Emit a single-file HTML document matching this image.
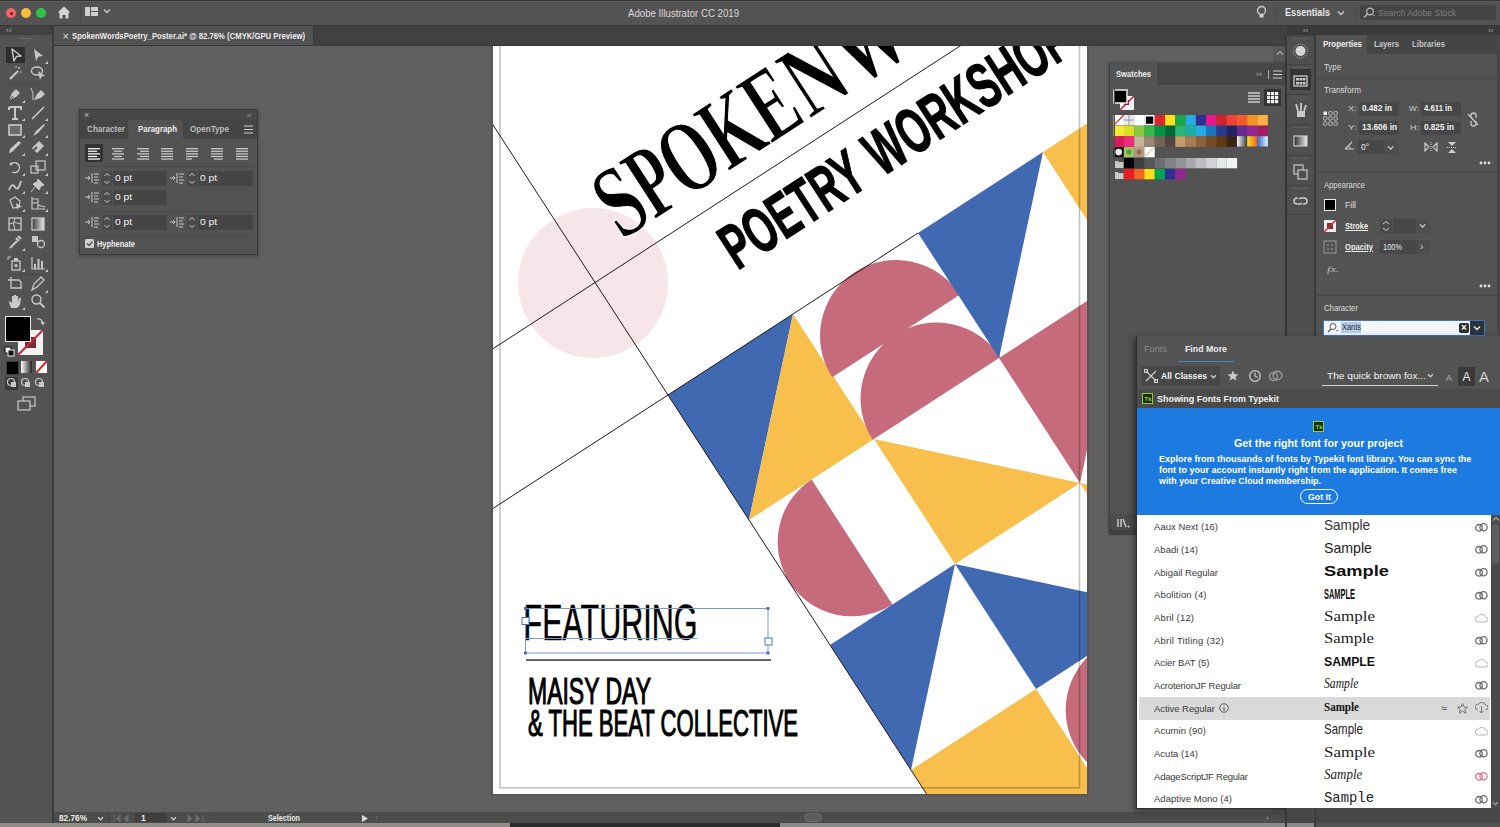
<!DOCTYPE html><html><head><meta charset="utf-8"><style>html,body{margin:0;padding:0;width:1500px;height:827px;overflow:hidden;background:#3b3b3b}body>div,body>svg{position:absolute}</style></head><body><div style="left:0px;top:0px;width:1500px;height:827px;background:#3b3b3b;"></div><div style="left:0px;top:0px;width:1500px;height:26px;background:#535353;border-top:1px solid #353535;border-bottom:1px solid #363636;box-sizing:border-box"></div><div style="left:0px;top:1px;width:1500px;height:1px;background:#5e5e5e;"></div><div style="left:54px;top:46px;width:1219px;height:766px;background:#606060;"></div><div style="left:491px;top:46px;width:598px;height:750px;background:#585858;"></div><svg style="left:493px;top:46px" width="594" height="748" viewBox="493 46 594 748"><rect x="493" y="46" width="594" height="748" fill="#fff"/><circle cx="593" cy="283" r="75" fill="#f6e6e9"/><polygon points="668.0,395.0 793.0,314.0 749.0,520.0" fill="#4169b1"/><polygon points="793.0,314.0 874.0,439.0 749.0,520.0" fill="#f8bf4c"/><path d="M832.2,377.3 A76,76 0 0 1 959.8,294.7 Z" fill="#c56b7b"/><path d="M872.7,439.8 A76,76 0 0 1 1000.3,357.2 Z" fill="#c56b7b"/><polygon points="918.0,233.0 1043.0,152.0 999.0,358.0" fill="#4169b1"/><polygon points="1043.0,152.0 1168.0,71.0 1249.0,196.0 1124.0,277.0" fill="#f8bf4c"/><path d="M811.6,479.6 A74.3,74.3 0 0 0 892.4,604.4 Z" fill="#c56b7b"/><polygon points="874.0,439.0 1080.0,483.0 955.0,564.0" fill="#f8bf4c"/><polygon points="999.0,358.0 1124.0,277.0 1080.0,483.0" fill="#c56b7b"/><polygon points="1080.0,483.0 1286.0,527.0 1161.0,608.0" fill="#f8bf4c"/><polygon points="830.0,645.0 955.0,564.0 911.0,770.0" fill="#4169b1"/><polygon points="955.0,564.0 1161.0,608.0 1036.0,689.0" fill="#4169b1"/><polygon points="911.0,770.0 1036.0,689.0 1117.0,814.0 992.0,895.0" fill="#f8bf4c"/><path d="M1098.2,648.1 A75,75 0 0 0 1179.8,773.9 Z" fill="#c56b7b"/><line x1="425.0" y1="20.0" x2="992.0" y2="895.0" stroke="#1a1a1a" stroke-width="1.0"/><line x1="345.1" y1="444.5" x2="1095.1" y2="-41.5" stroke="#1a1a1a" stroke-width="1.0"/><line x1="418.0" y1="557.0" x2="918.0" y2="233.0" stroke="#1a1a1a" stroke-width="1.0"/><text x="621.7" y="240.9" transform="rotate(-32.94 621.7 240.9)" font-family="Liberation Serif" font-weight="bold" font-size="104" textLength="40" lengthAdjust="spacingAndGlyphs" fill="#000" stroke="#fff" stroke-width="1.2">S</text><text x="654.5" y="219.7" transform="rotate(-32.94 654.5 219.7)" font-family="Liberation Serif" font-weight="bold" font-size="104" textLength="38" lengthAdjust="spacingAndGlyphs" fill="#000" stroke="#fff" stroke-width="1.2">P</text><text x="685.5" y="199.6" transform="rotate(-32.94 685.5 199.6)" font-family="Liberation Serif" font-weight="bold" font-size="104" textLength="52" lengthAdjust="spacingAndGlyphs" fill="#000" stroke="#fff" stroke-width="1.2">O</text><text x="728.3" y="171.8" transform="rotate(-32.94 728.3 171.8)" font-family="Liberation Serif" font-weight="bold" font-size="104" textLength="52" lengthAdjust="spacingAndGlyphs" fill="#000" stroke="#fff" stroke-width="1.2">K</text><text x="771.1" y="144.1" transform="rotate(-32.94 771.1 144.1)" font-family="Liberation Serif" font-weight="bold" font-size="104" textLength="44" lengthAdjust="spacingAndGlyphs" fill="#000" stroke="#fff" stroke-width="1.2">E</text><text x="809.7" y="119.1" transform="rotate(-32.94 809.7 119.1)" font-family="Liberation Serif" font-weight="bold" font-size="104" textLength="54" lengthAdjust="spacingAndGlyphs" fill="#000" stroke="#fff" stroke-width="1.2">N</text><text x="857.6" y="88.1" transform="rotate(-32.94 857.6 88.1)" font-family="Liberation Serif" font-weight="bold" font-size="104" textLength="68" lengthAdjust="spacingAndGlyphs" fill="#000" stroke="#fff" stroke-width="1.2">W</text><text x="915.5" y="50.6" transform="rotate(-32.94 915.5 50.6)" font-family="Liberation Serif" font-weight="bold" font-size="104" textLength="52" lengthAdjust="spacingAndGlyphs" fill="#000" stroke="#fff" stroke-width="1.2">O</text><text x="959.9" y="21.8" transform="rotate(-32.94 959.9 21.8)" font-family="Liberation Serif" font-weight="bold" font-size="104" textLength="48" lengthAdjust="spacingAndGlyphs" fill="#000" stroke="#fff" stroke-width="1.2">R</text><text x="1001.1" y="-4.9" transform="rotate(-32.94 1001.1 -4.9)" font-family="Liberation Serif" font-weight="bold" font-size="104" textLength="52" lengthAdjust="spacingAndGlyphs" fill="#000" stroke="#fff" stroke-width="1.2">D</text><text x="1045.5" y="-33.7" transform="rotate(-32.94 1045.5 -33.7)" font-family="Liberation Serif" font-weight="bold" font-size="104" textLength="40" lengthAdjust="spacingAndGlyphs" fill="#000" stroke="#fff" stroke-width="1.2">S</text><text x="737.6" y="270.7" transform="rotate(-32.94 737.6 270.7)" font-family="Liberation Sans" font-weight="bold" font-size="64" textLength="158" lengthAdjust="spacingAndGlyphs" fill="#000" stroke="#000" stroke-width="1.2">POETRY</text><text x="881.9" y="177.2" transform="rotate(-32.94 881.9 177.2)" font-family="Liberation Sans" font-weight="bold" font-size="64" textLength="232" lengthAdjust="spacingAndGlyphs" fill="#000" stroke="#000" stroke-width="1.2">WORKSHOP</text><text x="523.5" y="640" font-family="Liberation Sans" font-weight="normal" font-size="49.5" textLength="174" lengthAdjust="spacingAndGlyphs" fill="#000" stroke="#000" stroke-width="0.5">FEATURING</text><text x="528" y="703.5" font-family="Liberation Sans" font-weight="normal" font-size="36" textLength="123" lengthAdjust="spacingAndGlyphs" fill="#000" stroke="#000" stroke-width="1.1">MAISY DAY</text><text x="528" y="735.5" font-family="Liberation Sans" font-weight="normal" font-size="36" textLength="270" lengthAdjust="spacingAndGlyphs" fill="#000" stroke="#000" stroke-width="1.1">&amp; THE BEAT COLLECTIVE</text><rect x="526" y="659.3" width="245" height="1.5" fill="#333"/><rect x="525.5" y="608.5" width="242.5" height="44.5" fill="none" stroke="#7b9bd0" stroke-width="1"/><line x1="525.5" y1="638.5" x2="697" y2="638.5" stroke="#7b9bd0" stroke-width="1"/><rect x="524.0" y="607.0" width="3" height="3" fill="#4a72b8"/><rect x="766.5" y="607.0" width="3" height="3" fill="#4a72b8"/><rect x="524.0" y="651.5" width="3" height="3" fill="#4a72b8"/><rect x="766.5" y="651.5" width="3" height="3" fill="#4a72b8"/><rect x="522.0" y="617.5" width="7" height="7" fill="#fff" stroke="#4a72b8" stroke-width="1"/><rect x="765.0" y="638.0" width="7" height="7" fill="#fff" stroke="#4a72b8" stroke-width="1"/><rect x="500" y="30" width="579.5" height="757.8" fill="none" stroke="rgba(0,0,0,0.24)" stroke-width="1.6"/></svg><div style="left:6px;top:8px;width:10px;height:10px;border-radius:50%;background:#f2676a"></div><div style="left:20.5px;top:8px;width:10px;height:10px;border-radius:50%;background:#f8bd3e"></div><div style="left:35.5px;top:8px;width:10px;height:10px;border-radius:50%;background:#32c14a"></div><div style="left:9.5px;top:11.5px;width:3px;height:3px;border-radius:50%;background:#6a0d0d"></div><svg style="left:57px;top:6px;" width="14" height="13" viewBox="0 0 14 13"><path d="M7,0.5 L13.5,6.5 L11.5,6.5 L11.5,12.5 L8.5,12.5 L8.5,9 L5.5,9 L5.5,12.5 L2.5,12.5 L2.5,6.5 L0.5,6.5 Z" fill="#d4d4d4"/></svg><div style="left:80px;top:4px;width:1px;height:18px;background:#4a4a4a;"></div><svg style="left:85px;top:7px;" width="14" height="10" viewBox="0 0 14 10"><rect x="0" y="0" width="5" height="9" fill="#d0d0d0"/><rect x="6" y="0" width="7" height="4" fill="#d0d0d0"/><rect x="6" y="5" width="7" height="4" fill="#d0d0d0"/></svg><svg style="left:103px;top:8px;" width="8" height="6" viewBox="0 0 8 6"><path d="M1,1.5 L4,4.5 L7,1.5" fill="none" stroke="#cfcfcf" stroke-width="1.3"/></svg><div style="left:627.50px;top:8.50px;font:normal 10px 'Liberation Sans', sans-serif;line-height:10px;color:#dadada;white-space:pre;transform:scaleX(0.9646);transform-origin:0 0;">Adobe Illustrator CC 2019</div><svg style="left:1256px;top:5px;" width="11" height="15" viewBox="0 0 11 15"><circle cx="5.5" cy="5.5" r="4" fill="none" stroke="#cfcfcf" stroke-width="1.3"/><rect x="3.5" y="9.5" width="4" height="3" fill="#cfcfcf"/></svg><div style="left:1276px;top:4px;width:1px;height:18px;background:#4a4a4a;"></div><div style="left:1285.00px;top:7.00px;font:bold 11px 'Liberation Sans', sans-serif;line-height:11px;color:#e6e6e6;white-space:pre;transform:scaleX(0.8269);transform-origin:0 0;">Essentials</div><svg style="left:1336.5px;top:9.5px;" width="8" height="6" viewBox="0 0 8 6"><path d="M1,1.5 L4,4.5 L7,1.5" fill="none" stroke="#cfcfcf" stroke-width="1.3"/></svg><div style="left:1355px;top:4px;width:1px;height:18px;background:#4a4a4a;"></div><div style="left:1360px;top:5px;width:136px;height:15px;background:#454545;border-radius:2px"></div><svg style="left:1363px;top:7px;" width="14" height="11" viewBox="0 0 14 11"><circle cx="7" cy="4.5" r="3.3" fill="none" stroke="#bdbdbd" stroke-width="1.2"/><path d="M4.5,7 L1,10.5" stroke="#bdbdbd" stroke-width="1.4"/><path d="M10,8 l2,0 l-1,1.3z" fill="#bdbdbd"/></svg><div style="left:1378.00px;top:8.25px;font:normal 9.5px 'Liberation Sans', sans-serif;line-height:9.5px;color:#7d7d7d;white-space:pre;transform:scaleX(0.9060);transform-origin:0 0;">Search Adobe Stock</div><div style="left:0px;top:26px;width:1287px;height:20px;background:#414141;"></div><div style="left:0px;top:45px;width:1287px;height:1px;background:#383838;"></div><div style="left:54px;top:26px;width:260px;height:19px;background:#535353;"></div><div style="left:313px;top:26px;width:1px;height:19px;background:#3a3a3a;"></div><div style="left:62.50px;top:30.50px;font:normal 11px 'Liberation Sans', sans-serif;line-height:11px;color:#e2e2e2;white-space:pre;">×</div><div style="left:72.00px;top:31.50px;font:bold 9px 'Liberation Sans', sans-serif;line-height:9px;color:#ececec;white-space:pre;transform:scaleX(0.8560);transform-origin:0 0;">SpokenWordsPoetry_Poster.ai* @ 82.76% (CMYK/GPU Preview)</div><div style="left:0px;top:26px;width:52px;height:801px;background:#535353;"></div><div style="left:0px;top:26px;width:52px;height:9px;background:#424242;"></div><div style="left:52px;top:26px;width:2px;height:801px;background:#3a3a3a;"></div><div style="left:6.00px;top:26.00px;font:normal 9px 'Liberation Sans', sans-serif;line-height:9px;color:#aaa;white-space:pre;">‹‹</div><div style="left:19px;top:38px;width:14px;height:1px;background:#6a6a6a;"></div><div style="left:6px;top:47px;width:19px;height:16px;background:#2f2f2f;"></div><svg style="left:7.5px;top:47.0px;" width="16" height="16" viewBox="0 0 16 16"><path d="M4,2 L13,9 L8.5,9.5 L6,14 Z" fill="none" stroke="#c8c8c8" stroke-width="1.5" stroke-linejoin="round"/></svg><svg style="left:30.0px;top:47.0px;" width="16" height="16" viewBox="0 0 16 16"><path d="M4,2 L13,9 L8.5,9.5 L6,14 Z" fill="#c8c8c8"/></svg><svg style="left:45px;top:61px;" width="3" height="3" viewBox="0 0 3 3"><path d="M3,0 L3,3 L0,3Z" fill="#c8c8c8"/></svg><svg style="left:7.0px;top:65.0px;" width="16" height="16" viewBox="0 0 16 16"><path d="M3,14 L11,6" stroke="#c8c8c8" stroke-width="2"/><circle cx="12" cy="3" r="1" fill="#c8c8c8"/><circle cx="14" cy="7" r="0.8" fill="#c8c8c8"/><circle cx="9" cy="2" r="0.8" fill="#c8c8c8"/></svg><svg style="left:30.0px;top:65.0px;" width="16" height="16" viewBox="0 0 16 16"><ellipse cx="7" cy="6" rx="5.5" ry="4" fill="none" stroke="#c8c8c8" stroke-width="1.4"/><path d="M8,6 L15,11 L11.5,11.5 L10,15 Z" fill="#c8c8c8"/></svg><div style="left:8px;top:83px;width:38px;height:1px;background:#4b4b4b;"></div><svg style="left:7.0px;top:86.0px;" width="16" height="16" viewBox="0 0 16 16"><path d="M2,14 L5,7 L9,3 L13,7 L9,11 Z" fill="#c8c8c8"/><path d="M2,14 L6,10" stroke="#535353" stroke-width="1"/></svg><svg style="left:22px;top:100px;" width="3" height="3" viewBox="0 0 3 3"><path d="M3,0 L3,3 L0,3Z" fill="#c8c8c8"/></svg><svg style="left:30.0px;top:86.0px;" width="16" height="16" viewBox="0 0 16 16"><path d="M4,14 L7,8 L11,4 L15,8 L11,12 Z" fill="#c8c8c8"/><path d="M1,2 q3,5 2,12" fill="none" stroke="#c8c8c8" stroke-width="1"/></svg><svg style="left:7.0px;top:104.5px;" width="16" height="16" viewBox="0 0 16 16"><path d="M2,2 L14,2 L14,5 M2,2 L2,5 M8,2 L8,14 M5,14 L11,14" fill="none" stroke="#c8c8c8" stroke-width="2"/></svg><svg style="left:22px;top:118px;" width="3" height="3" viewBox="0 0 3 3"><path d="M3,0 L3,3 L0,3Z" fill="#c8c8c8"/></svg><svg style="left:30.0px;top:104.5px;" width="16" height="16" viewBox="0 0 16 16"><path d="M2,14 L14,2" stroke="#c8c8c8" stroke-width="1.6"/></svg><svg style="left:45px;top:118px;" width="3" height="3" viewBox="0 0 3 3"><path d="M3,0 L3,3 L0,3Z" fill="#c8c8c8"/></svg><svg style="left:7.0px;top:121.5px;" width="16" height="16" viewBox="0 0 16 16"><rect x="2" y="3" width="12" height="10" fill="#6a6a6a" stroke="#c8c8c8" stroke-width="1.6"/></svg><svg style="left:22px;top:135px;" width="3" height="3" viewBox="0 0 3 3"><path d="M3,0 L3,3 L0,3Z" fill="#c8c8c8"/></svg><svg style="left:30.0px;top:121.5px;" width="16" height="16" viewBox="0 0 16 16"><path d="M3,14 L6,9 L14,2 L15,3 L8,11 Z" fill="#c8c8c8"/></svg><svg style="left:45px;top:135px;" width="3" height="3" viewBox="0 0 3 3"><path d="M3,0 L3,3 L0,3Z" fill="#c8c8c8"/></svg><svg style="left:7.0px;top:139.0px;" width="16" height="16" viewBox="0 0 16 16"><path d="M2,14 L3,10 L12,2 L14,4 L5,13 Z" fill="#c8c8c8"/></svg><svg style="left:22px;top:153px;" width="3" height="3" viewBox="0 0 3 3"><path d="M3,0 L3,3 L0,3Z" fill="#c8c8c8"/></svg><svg style="left:30.0px;top:139.0px;" width="16" height="16" viewBox="0 0 16 16"><path d="M2,9 L9,2 L14,7 L7,14 Z" fill="#c8c8c8"/><path d="M4,11 L7,8" stroke="#535353" stroke-width="2"/></svg><svg style="left:45px;top:153px;" width="3" height="3" viewBox="0 0 3 3"><path d="M3,0 L3,3 L0,3Z" fill="#c8c8c8"/></svg><svg style="left:7.0px;top:159.0px;" width="16" height="16" viewBox="0 0 16 16"><path d="M4,5 A5,5 0 1 1 5,13" fill="none" stroke="#c8c8c8" stroke-width="1.4"/><circle cx="4" cy="5" r="1.4" fill="#c8c8c8"/></svg><svg style="left:22px;top:173px;" width="3" height="3" viewBox="0 0 3 3"><path d="M3,0 L3,3 L0,3Z" fill="#c8c8c8"/></svg><svg style="left:30.0px;top:159.0px;" width="16" height="16" viewBox="0 0 16 16"><rect x="6" y="2" width="9" height="9" fill="none" stroke="#c8c8c8" stroke-width="1.2"/><rect x="1" y="7" width="7" height="7" fill="none" stroke="#c8c8c8" stroke-width="1.2"/></svg><svg style="left:45px;top:173px;" width="3" height="3" viewBox="0 0 3 3"><path d="M3,0 L3,3 L0,3Z" fill="#c8c8c8"/></svg><svg style="left:7.0px;top:177.0px;" width="16" height="16" viewBox="0 0 16 16"><path d="M2,13 q3,-8 6,-3 q3,5 6,-6" fill="none" stroke="#c8c8c8" stroke-width="1.8"/></svg><svg style="left:22px;top:191px;" width="3" height="3" viewBox="0 0 3 3"><path d="M3,0 L3,3 L0,3Z" fill="#c8c8c8"/></svg><svg style="left:30.0px;top:177.0px;" width="16" height="16" viewBox="0 0 16 16"><path d="M8,2 L14,8 L11,9 L9,13 L3,7 L7,5 Z M5,10 L1,15" fill="#c8c8c8" stroke="#c8c8c8" stroke-width="1"/></svg><svg style="left:45px;top:191px;" width="3" height="3" viewBox="0 0 3 3"><path d="M3,0 L3,3 L0,3Z" fill="#c8c8c8"/></svg><svg style="left:7.0px;top:195.0px;" width="16" height="16" viewBox="0 0 16 16"><path d="M3,5 L8,2 L13,6 L12,12 L6,13 Z" fill="none" stroke="#c8c8c8" stroke-width="1.2"/><path d="M9,8 L15,12 L11.5,12.5 L10,15 Z" fill="#c8c8c8"/></svg><svg style="left:22px;top:209px;" width="3" height="3" viewBox="0 0 3 3"><path d="M3,0 L3,3 L0,3Z" fill="#c8c8c8"/></svg><svg style="left:30.0px;top:195.0px;" width="16" height="16" viewBox="0 0 16 16"><path d="M2,2 L2,14 L15,14 M2,4 L8,4 L8,14 M2,8 L8,8 M8,10 L15,12" fill="none" stroke="#c8c8c8" stroke-width="1.2"/></svg><svg style="left:45px;top:209px;" width="3" height="3" viewBox="0 0 3 3"><path d="M3,0 L3,3 L0,3Z" fill="#c8c8c8"/></svg><div style="left:8px;top:213px;width:38px;height:1px;background:#4b4b4b;"></div><svg style="left:7.0px;top:216.0px;" width="16" height="16" viewBox="0 0 16 16"><rect x="2" y="2" width="12" height="12" fill="none" stroke="#c8c8c8" stroke-width="1.3"/><path d="M2,8 q6,-3 12,0 M8,2 q-3,6 0,12" fill="none" stroke="#c8c8c8" stroke-width="1"/></svg><svg style="left:30.0px;top:216.0px;" width="16" height="16" viewBox="0 0 16 16"><defs><linearGradient id="g1"><stop offset="0" stop-color="#333"/><stop offset="1" stop-color="#eee"/></linearGradient></defs><rect x="2" y="2" width="12" height="12" fill="url(#g1)" stroke="#c8c8c8" stroke-width="1.3"/></svg><svg style="left:7.0px;top:234.0px;" width="16" height="16" viewBox="0 0 16 16"><path d="M3,14 L10,7 M9,4 L12,7 M11,2 L14,5" stroke="#c8c8c8" stroke-width="2"/></svg><svg style="left:22px;top:248px;" width="3" height="3" viewBox="0 0 3 3"><path d="M3,0 L3,3 L0,3Z" fill="#c8c8c8"/></svg><svg style="left:30.0px;top:234.0px;" width="16" height="16" viewBox="0 0 16 16"><rect x="2" y="2" width="6" height="6" fill="#c8c8c8"/><circle cx="11" cy="10" r="3.5" fill="none" stroke="#c8c8c8" stroke-width="1.3"/></svg><svg style="left:7.0px;top:255.0px;" width="16" height="16" viewBox="0 0 16 16"><rect x="5" y="6" width="8" height="9" fill="none" stroke="#c8c8c8" stroke-width="1.3"/><circle cx="9" cy="10.5" r="1.6" fill="#c8c8c8"/><rect x="7" y="3" width="4" height="3" fill="#c8c8c8"/><path d="M1,2 L4,2 M1,2 L1,5" stroke="#c8c8c8"/></svg><svg style="left:22px;top:269px;" width="3" height="3" viewBox="0 0 3 3"><path d="M3,0 L3,3 L0,3Z" fill="#c8c8c8"/></svg><svg style="left:30.0px;top:255.0px;" width="16" height="16" viewBox="0 0 16 16"><path d="M2,2 L2,14 L15,14" fill="none" stroke="#c8c8c8" stroke-width="1.2"/><rect x="4" y="9" width="2" height="5" fill="#c8c8c8"/><rect x="7.5" y="4" width="2" height="10" fill="#c8c8c8"/><rect x="11" y="6" width="2" height="8" fill="#c8c8c8"/></svg><svg style="left:45px;top:269px;" width="3" height="3" viewBox="0 0 3 3"><path d="M3,0 L3,3 L0,3Z" fill="#c8c8c8"/></svg><div style="left:8px;top:274px;width:38px;height:1px;background:#4b4b4b;"></div><svg style="left:7.0px;top:276.0px;" width="16" height="16" viewBox="0 0 16 16"><path d="M4,1 L4,12 L15,12 M1,4 L12,4 L14,6 L14,12" fill="none" stroke="#c8c8c8" stroke-width="1.3"/></svg><svg style="left:30.0px;top:276.0px;" width="16" height="16" viewBox="0 0 16 16"><path d="M2,14 L4,8 L11,1 L14,4 L7,11 Z" fill="none" stroke="#c8c8c8" stroke-width="1.3"/></svg><svg style="left:45px;top:290px;" width="3" height="3" viewBox="0 0 3 3"><path d="M3,0 L3,3 L0,3Z" fill="#c8c8c8"/></svg><svg style="left:7.0px;top:293.0px;" width="16" height="16" viewBox="0 0 16 16"><path d="M4,15 L2,9 L3,8 L5,10 L5,3 L7,3 L7,8 L7,2 L9,2 L9,8 L9,3 L11,3 L11,9 L12,5 L14,5 L13,12 L10,15 Z" fill="#c8c8c8"/></svg><svg style="left:22px;top:307px;" width="3" height="3" viewBox="0 0 3 3"><path d="M3,0 L3,3 L0,3Z" fill="#c8c8c8"/></svg><svg style="left:30.0px;top:293.0px;" width="16" height="16" viewBox="0 0 16 16"><circle cx="6.5" cy="6.5" r="4.5" fill="none" stroke="#c8c8c8" stroke-width="1.4"/><path d="M10,10 L14.5,14.5" stroke="#c8c8c8" stroke-width="1.8"/></svg><div style="left:5px;top:316px;width:26px;height:26px;background:#000;border:1.5px solid #e8e8e8;box-sizing:border-box"></div><svg style="left:17px;top:329px;" width="27" height="27" viewBox="0 0 27 27"><rect x="1" y="1" width="25" height="25" fill="#f2f2f2"/><rect x="8" y="8" width="11" height="11" fill="#7a2e33"/><path d="M1,26 L26,1" stroke="#c8283a" stroke-width="2"/></svg><div style="left:5px;top:316px;width:26px;height:26px;background:#000;border:1.5px solid #e8e8e8;box-sizing:border-box"></div><svg style="left:35px;top:316px;" width="10" height="10" viewBox="0 0 10 10"><path d="M2,3 q5,-1 6,5 M6,6 L8,8.5 L9.5,6" fill="none" stroke="#c8c8c8" stroke-width="1.2"/></svg><svg style="left:4px;top:346px;" width="11" height="11" viewBox="0 0 11 11"><rect x="1" y="1" width="6" height="6" fill="#eee" stroke="#111"/><rect x="4" y="4" width="6" height="6" fill="#111" stroke="#eee"/></svg><div style="left:6px;top:361px;width:11px;height:12px;background:#000;border:1px solid #3a3a3a"></div><svg style="left:21px;top:361px;" width="11" height="12" viewBox="0 0 11 12"><defs><linearGradient id="g2"><stop offset="0" stop-color="#fff"/><stop offset="1" stop-color="#222"/></linearGradient></defs><rect width="11" height="12" fill="url(#g2)"/></svg><svg style="left:36px;top:361px;" width="11" height="12" viewBox="0 0 11 12"><rect width="11" height="12" fill="#fff"/><path d="M0,12 L11,0" stroke="#d22" stroke-width="2"/></svg><div style="left:5px;top:377px;width:13px;height:13px;background:#3a3a3a;"></div><svg style="left:5.5px;top:377px;" width="12" height="12" viewBox="0 0 12 12"><circle cx="5" cy="5" r="3.5" fill="none" stroke="#c8c8c8" stroke-width="1.2"/><rect x="5" y="5" width="5" height="5" fill="#c8c8c8"/></svg><svg style="left:20px;top:377px;" width="12" height="12" viewBox="0 0 12 12"><circle cx="5" cy="5" r="3.5" fill="none" stroke="#c8c8c8" stroke-width="1.2"/><rect x="5" y="5" width="5" height="5" fill="#c8c8c8"/></svg><svg style="left:34px;top:377px;" width="12" height="12" viewBox="0 0 12 12"><circle cx="5" cy="5" r="3.5" fill="none" stroke="#c8c8c8" stroke-width="1.2"/><rect x="5" y="5" width="5" height="5" fill="#c8c8c8"/></svg><svg style="left:17px;top:396px;" width="19" height="15" viewBox="0 0 19 15"><rect x="6" y="1" width="12" height="9" fill="none" stroke="#c8c8c8" stroke-width="1.2"/><rect x="1" y="5" width="12" height="9" fill="#535353" stroke="#c8c8c8" stroke-width="1.2"/></svg><div style="left:54px;top:812px;width:1233px;height:11px;background:#4c4c4c;"></div><div style="left:0px;top:823px;width:510px;height:4px;background:#8e8e86;"></div><div style="left:510px;top:823px;width:270px;height:4px;background:#2c2c2c;"></div><div style="left:780px;top:823px;width:650px;height:4px;background:#8a8a8a;"></div><div style="left:1430px;top:823px;width:70px;height:4px;background:#343434;"></div><div style="left:59.00px;top:814.25px;font:bold 8.5px 'Liberation Sans', sans-serif;line-height:8.5px;color:#ececec;white-space:pre;transform:scaleX(0.9707);transform-origin:0 0;">82.76%</div><svg style="left:96.5px;top:815.5px;" width="7.0" height="5.0" viewBox="0 0 7.0 5.0"><path d="M1,1.25 L3.5,3.75 L6.0,1.25" fill="none" stroke="#ccc" stroke-width="1.3"/></svg><div style="left:108px;top:813px;width:1px;height:9px;background:#3a3a3a;"></div><svg style="left:113px;top:814px;" width="20" height="9" viewBox="0 0 20 9"><path d="M1,1 V8 M7,1 L3,4.5 L7,8Z M15,1 L11,4.5 L15,8Z" stroke="#6a6a6a" fill="#6a6a6a" stroke-width="1"/></svg><div style="left:135px;top:813px;width:32px;height:9px;background:#3f3f3f;"></div><div style="left:141.00px;top:814.25px;font:bold 8.5px 'Liberation Sans', sans-serif;line-height:8.5px;color:#ececec;white-space:pre;">1</div><svg style="left:169.5px;top:815.5px;" width="7.0" height="5.0" viewBox="0 0 7.0 5.0"><path d="M1,1.25 L3.5,3.75 L6.0,1.25" fill="none" stroke="#ccc" stroke-width="1.3"/></svg><svg style="left:185px;top:814px;" width="20" height="9" viewBox="0 0 20 9"><path d="M3,1 L7,4.5 L3,8Z M11,1 L15,4.5 L11,8Z M18,1 V8" stroke="#6a6a6a" fill="#6a6a6a" stroke-width="1"/></svg><div style="left:212px;top:813px;width:146px;height:9px;background:#4d4d4d;"></div><div style="left:268.00px;top:814.25px;font:bold 8.5px 'Liberation Sans', sans-serif;line-height:8.5px;color:#ececec;white-space:pre;transform:scaleX(0.8466);transform-origin:0 0;">Selection</div><svg style="left:361px;top:814px;" width="8" height="9" viewBox="0 0 8 9"><path d="M1,1 L7,4.5 L1,8Z" fill="#dcdcdc"/></svg><div style="left:375.00px;top:814.00px;font:normal 9px 'Liberation Sans', sans-serif;line-height:9px;color:#777;white-space:pre;">‹</div><div style="left:804px;top:813px;width:18px;height:9px;background:#5c5c5c;border-radius:5px;border:1px solid #6a6a6a;box-sizing:border-box"></div><div style="left:1273px;top:46px;width:14px;height:766px;background:#575757;"></div><svg style="left:1275.5px;top:50px;" width="8" height="6" viewBox="0 0 8 6"><path d="M1,4.5 L4,1.5 L7,4.5" fill="none" stroke="#aaa" stroke-width="1.2"/></svg><div style="left:79px;top:109px;width:179px;height:146px;background:#3c3c3c;box-shadow:0 1px 4px rgba(0,0,0,0.35)"></div><div style="left:80px;top:110px;width:177px;height:144px;background:#535353;"></div><div style="left:80px;top:110px;width:177px;height:10px;background:#474747;"></div><div style="left:84.00px;top:110.50px;font:normal 9px 'Liberation Sans', sans-serif;line-height:9px;color:#bbb;white-space:pre;">×</div><div style="left:247.00px;top:111.50px;font:normal 7px 'Liberation Sans', sans-serif;line-height:7px;color:#aaa;white-space:pre;">‹‹</div><div style="left:80px;top:120px;width:177px;height:19px;background:#454545;"></div><div style="left:128px;top:120px;width:55px;height:19px;background:#535353;"></div><div style="left:87.00px;top:125.00px;font:bold 9px 'Liberation Sans', sans-serif;line-height:9px;color:#bdbdbd;white-space:pre;transform:scaleX(0.9041);transform-origin:0 0;">Character</div><div style="left:131.00px;top:126.50px;font:normal 6px 'Liberation Sans', sans-serif;line-height:6px;color:#777;white-space:pre;">○</div><div style="left:138.00px;top:125.00px;font:bold 9px 'Liberation Sans', sans-serif;line-height:9px;color:#f0f0f0;white-space:pre;transform:scaleX(0.8758);transform-origin:0 0;">Paragraph</div><div style="left:190.00px;top:125.00px;font:bold 9px 'Liberation Sans', sans-serif;line-height:9px;color:#bdbdbd;white-space:pre;transform:scaleX(0.8998);transform-origin:0 0;">OpenType</div><svg style="left:244px;top:125px;" width="10" height="9" viewBox="0 0 10 9"><path d="M0,1 H9 M0,4.5 H9 M0,8 H9" stroke="#cfcfcf" stroke-width="1.2"/></svg><div style="left:85px;top:144px;width:18px;height:18px;background:#333333;"></div><svg style="left:88px;top:147px;" width="12" height="13" viewBox="0 0 12 13"><rect x="0" y="1.0" width="12" height="1.3" fill="#f0f0f0"/><rect x="0" y="3.6" width="9" height="1.3" fill="#f0f0f0"/><rect x="0" y="6.2" width="12" height="1.3" fill="#f0f0f0"/><rect x="0" y="8.8" width="9" height="1.3" fill="#f0f0f0"/><rect x="0" y="11.4" width="12" height="1.3" fill="#f0f0f0"/></svg><svg style="left:112px;top:147px;" width="12" height="13" viewBox="0 0 12 13"><rect x="0.0" y="1.0" width="12" height="1.3" fill="#c6c6c6"/><rect x="2.0" y="3.6" width="8" height="1.3" fill="#c6c6c6"/><rect x="0.0" y="6.2" width="12" height="1.3" fill="#c6c6c6"/><rect x="2.0" y="8.8" width="8" height="1.3" fill="#c6c6c6"/><rect x="0.0" y="11.4" width="12" height="1.3" fill="#c6c6c6"/></svg><svg style="left:137px;top:147px;" width="12" height="13" viewBox="0 0 12 13"><rect x="0" y="1.0" width="12" height="1.3" fill="#c6c6c6"/><rect x="3" y="3.6" width="9" height="1.3" fill="#c6c6c6"/><rect x="0" y="6.2" width="12" height="1.3" fill="#c6c6c6"/><rect x="3" y="8.8" width="9" height="1.3" fill="#c6c6c6"/><rect x="0" y="11.4" width="12" height="1.3" fill="#c6c6c6"/></svg><svg style="left:161px;top:147px;" width="12" height="13" viewBox="0 0 12 13"><rect x="0" y="1.0" width="12" height="1.3" fill="#c6c6c6"/><rect x="0" y="3.6" width="12" height="1.3" fill="#c6c6c6"/><rect x="0" y="6.2" width="12" height="1.3" fill="#c6c6c6"/><rect x="0" y="8.8" width="12" height="1.3" fill="#c6c6c6"/><rect x="0" y="11.4" width="12" height="1.3" fill="#c6c6c6"/></svg><svg style="left:186px;top:147px;" width="12" height="13" viewBox="0 0 12 13"><rect x="0" y="1.0" width="12" height="1.3" fill="#c6c6c6"/><rect x="0" y="3.6" width="12" height="1.3" fill="#c6c6c6"/><rect x="0" y="6.2" width="12" height="1.3" fill="#c6c6c6"/><rect x="0" y="8.8" width="12" height="1.3" fill="#c6c6c6"/><rect x="0" y="11.4" width="6" height="1.3" fill="#c6c6c6"/></svg><svg style="left:211px;top:147px;" width="12" height="13" viewBox="0 0 12 13"><rect x="0" y="1.0" width="12" height="1.3" fill="#c6c6c6"/><rect x="0" y="3.6" width="12" height="1.3" fill="#c6c6c6"/><rect x="0" y="6.2" width="12" height="1.3" fill="#c6c6c6"/><rect x="0" y="8.8" width="12" height="1.3" fill="#c6c6c6"/><rect x="3" y="11.4" width="9" height="1.3" fill="#c6c6c6"/></svg><svg style="left:236px;top:147px;" width="12" height="13" viewBox="0 0 12 13"><rect x="0" y="1.0" width="12" height="1.3" fill="#c6c6c6"/><rect x="0" y="3.6" width="12" height="1.3" fill="#c6c6c6"/><rect x="0" y="6.2" width="12" height="1.3" fill="#c6c6c6"/><rect x="0" y="8.8" width="12" height="1.3" fill="#c6c6c6"/><rect x="0" y="11.4" width="12" height="1.3" fill="#c6c6c6"/></svg><div style="left:84px;top:166px;width:169px;height:1px;background:#4a4a4a;"></div><svg style="left:85px;top:172px;" width="14" height="12" viewBox="0 0 14 12"><path d="M0,6 H5 M3,4 L5,6 L3,8 M7,1 V11 M9,2 H14 M9,5 H13 M9,8 H14 M9,11 H13" fill="none" stroke="#c9c9c9" stroke-width="1"/></svg><div style="left:102px;top:171px;width:10px;height:15px;background:#4a4a4a;"></div><svg style="left:103px;top:172px;" width="8" height="13" viewBox="0 0 8 13"><path d="M1.5,4 L4,1.5 L6.5,4 M1.5,9 L4,11.5 L6.5,9" fill="none" stroke="#cfcfcf" stroke-width="1"/></svg><div style="left:113px;top:171px;width:54px;height:15px;background:#454545;"></div><div style="left:115.00px;top:174.25px;font:normal 8.5px 'Liberation Sans', sans-serif;line-height:8.5px;color:#f4f4f4;white-space:pre;transform:scaleX(1.1982);transform-origin:0 0;">0 pt</div><svg style="left:170px;top:172px;" width="14" height="12" viewBox="0 0 14 12"><path d="M0,6 H5 M3,4 L5,6 L3,8 M7,1 V11 M9,2 H14 M9,5 H13 M9,8 H14 M9,11 H13" fill="none" stroke="#c9c9c9" stroke-width="1"/></svg><div style="left:187px;top:171px;width:10px;height:15px;background:#4a4a4a;"></div><svg style="left:188px;top:172px;" width="8" height="13" viewBox="0 0 8 13"><path d="M1.5,4 L4,1.5 L6.5,4 M1.5,9 L4,11.5 L6.5,9" fill="none" stroke="#cfcfcf" stroke-width="1"/></svg><div style="left:198px;top:171px;width:55px;height:15px;background:#454545;"></div><div style="left:200.00px;top:174.25px;font:normal 8.5px 'Liberation Sans', sans-serif;line-height:8.5px;color:#f4f4f4;white-space:pre;transform:scaleX(1.1982);transform-origin:0 0;">0 pt</div><svg style="left:85px;top:191px;" width="14" height="12" viewBox="0 0 14 12"><path d="M0,6 H5 M3,4 L5,6 L3,8 M7,1 V11 M9,2 H14 M9,5 H13 M9,8 H14 M9,11 H13" fill="none" stroke="#c9c9c9" stroke-width="1"/></svg><div style="left:102px;top:190px;width:10px;height:15px;background:#4a4a4a;"></div><svg style="left:103px;top:191px;" width="8" height="13" viewBox="0 0 8 13"><path d="M1.5,4 L4,1.5 L6.5,4 M1.5,9 L4,11.5 L6.5,9" fill="none" stroke="#cfcfcf" stroke-width="1"/></svg><div style="left:113px;top:190px;width:54px;height:15px;background:#454545;"></div><div style="left:115.00px;top:193.25px;font:normal 8.5px 'Liberation Sans', sans-serif;line-height:8.5px;color:#f4f4f4;white-space:pre;transform:scaleX(1.1982);transform-origin:0 0;">0 pt</div><div style="left:84px;top:211px;width:169px;height:1px;background:#4a4a4a;"></div><svg style="left:85px;top:216px;" width="14" height="12" viewBox="0 0 14 12"><path d="M0,6 H5 M3,4 L5,6 L3,8 M7,1 V11 M9,2 H14 M9,5 H13 M9,8 H14 M9,11 H13" fill="none" stroke="#c9c9c9" stroke-width="1"/></svg><div style="left:102px;top:215px;width:10px;height:15px;background:#4a4a4a;"></div><svg style="left:103px;top:216px;" width="8" height="13" viewBox="0 0 8 13"><path d="M1.5,4 L4,1.5 L6.5,4 M1.5,9 L4,11.5 L6.5,9" fill="none" stroke="#cfcfcf" stroke-width="1"/></svg><div style="left:113px;top:215px;width:54px;height:15px;background:#454545;"></div><div style="left:115.00px;top:218.25px;font:normal 8.5px 'Liberation Sans', sans-serif;line-height:8.5px;color:#f4f4f4;white-space:pre;transform:scaleX(1.1982);transform-origin:0 0;">0 pt</div><svg style="left:170px;top:216px;" width="14" height="12" viewBox="0 0 14 12"><path d="M0,6 H5 M3,4 L5,6 L3,8 M7,1 V11 M9,2 H14 M9,5 H13 M9,8 H14 M9,11 H13" fill="none" stroke="#c9c9c9" stroke-width="1"/></svg><div style="left:187px;top:215px;width:10px;height:15px;background:#4a4a4a;"></div><svg style="left:188px;top:216px;" width="8" height="13" viewBox="0 0 8 13"><path d="M1.5,4 L4,1.5 L6.5,4 M1.5,9 L4,11.5 L6.5,9" fill="none" stroke="#cfcfcf" stroke-width="1"/></svg><div style="left:198px;top:215px;width:55px;height:15px;background:#454545;"></div><div style="left:200.00px;top:218.25px;font:normal 8.5px 'Liberation Sans', sans-serif;line-height:8.5px;color:#f4f4f4;white-space:pre;transform:scaleX(1.1982);transform-origin:0 0;">0 pt</div><div style="left:84px;top:236px;width:169px;height:1px;background:#4a4a4a;"></div><div style="left:85px;top:239px;width:9px;height:9px;background:#cfcfcf;border-radius:1.5px"></div><svg style="left:85px;top:239px;" width="9" height="9" viewBox="0 0 9 9"><path d="M2,4.5 L4,6.5 L7.5,2.5" fill="none" stroke="#555" stroke-width="1.3"/></svg><div style="left:97.00px;top:239.75px;font:bold 8.5px 'Liberation Sans', sans-serif;line-height:8.5px;color:#ececec;white-space:pre;transform:scaleX(0.8742);transform-origin:0 0;">Hyphenate</div><div style="left:1287px;top:26px;width:213px;height:9px;background:#3a3a3a;"></div><div style="left:1303.00px;top:26.50px;font:normal 8px 'Liberation Sans', sans-serif;line-height:8px;color:#aaa;white-space:pre;">‹‹</div><div style="left:1488.00px;top:26.50px;font:normal 8px 'Liberation Sans', sans-serif;line-height:8px;color:#aaa;white-space:pre;">››</div><div style="left:1285px;top:35px;width:2px;height:792px;background:#3a3a3a;"></div><div style="left:1109px;top:63px;width:176px;height:471px;background:#535353;box-shadow:0 0 3px rgba(0,0,0,0.4)"></div><div style="left:1109px;top:63px;width:176px;height:22px;background:#464646;"></div><div style="left:1109px;top:63px;width:48px;height:22px;background:#535353;"></div><div style="left:1116.00px;top:70.00px;font:bold 9px 'Liberation Sans', sans-serif;line-height:9px;color:#eeeeee;white-space:pre;transform:scaleX(0.8427);transform-origin:0 0;">Swatches</div><div style="left:1256.00px;top:70.00px;font:normal 9px 'Liberation Sans', sans-serif;line-height:9px;color:#bbb;white-space:pre;">››</div><div style="left:1268px;top:70px;width:1px;height:9px;background:#aaa;"></div><svg style="left:1273px;top:70px;" width="9" height="9" viewBox="0 0 9 9"><path d="M0,1 H9 M0,4.5 H9 M0,8 H9" stroke="#cfcfcf" stroke-width="1.2"/></svg><svg style="left:1113px;top:89px;" width="23" height="23" viewBox="0 0 23 23"><rect x="7" y="7" width="14" height="14" fill="#f2f2f2"/><path d="M7,21 L21,7" stroke="#c8283a" stroke-width="1.6"/><rect x="11" y="11" width="5" height="5" fill="#7a2e33"/><rect x="1" y="1" width="13" height="13" fill="#000" stroke="#eee" stroke-width="1.5"/></svg><svg style="left:1248px;top:92px;" width="12" height="12" viewBox="0 0 12 12"><path d="M0,1 H12 M0,4 H12 M0,7 H12 M0,10 H12" stroke="#cfcfcf" stroke-width="1.4"/></svg><div style="left:1264px;top:89px;width:17px;height:17px;background:#333;"></div><svg style="left:1266px;top:91px;" width="13" height="13" viewBox="0 0 13 13"><rect x="1" y="1" width="3.2" height="3.2" fill="#f2f2f2"/><rect x="1" y="5" width="3.2" height="3.2" fill="#f2f2f2"/><rect x="1" y="9" width="3.2" height="3.2" fill="#f2f2f2"/><rect x="5" y="1" width="3.2" height="3.2" fill="#f2f2f2"/><rect x="5" y="5" width="3.2" height="3.2" fill="#f2f2f2"/><rect x="5" y="9" width="3.2" height="3.2" fill="#f2f2f2"/><rect x="9" y="1" width="3.2" height="3.2" fill="#f2f2f2"/><rect x="9" y="5" width="3.2" height="3.2" fill="#f2f2f2"/><rect x="9" y="9" width="3.2" height="3.2" fill="#f2f2f2"/></svg><svg style="left:0px;top:0px;pointer-events:none" width="1500" height="200" viewBox="0 0 1500 200"><rect x="1113.6" y="115.0" width="10.3" height="10.3" fill="#fff"/><path d="M1113.6,125.3 L1123.9,115.0" stroke="#d22" stroke-width="1.2"/><rect x="1123.9" y="115.0" width="10.3" height="10.3" fill="#e9e9e9"/><path d="M1128.9,115.0 V125.0 M1123.9,120.0 H1133.9" stroke="#888" stroke-width="0.8"/><rect x="1134.2" y="115.0" width="10.4" height="10.7" fill="#ffffff"/><rect x="1144.4" y="115.0" width="10.3" height="10.3" fill="#fff"/><rect x="1145.9" y="116.5" width="7.3" height="7.3" fill="#000"/><rect x="1154.7" y="115.0" width="10.4" height="10.7" fill="#e3242b"/><rect x="1165.0" y="115.0" width="10.4" height="10.7" fill="#f7e11d"/><rect x="1175.3" y="115.0" width="10.4" height="10.7" fill="#1aa64a"/><rect x="1185.6" y="115.0" width="10.4" height="10.7" fill="#26aae1"/><rect x="1195.8" y="115.0" width="10.4" height="10.7" fill="#2e3192"/><rect x="1206.1" y="115.0" width="10.4" height="10.7" fill="#e5178b"/><rect x="1216.4" y="115.0" width="10.4" height="10.7" fill="#d2232a"/><rect x="1226.7" y="115.0" width="10.4" height="10.7" fill="#ef4136"/><rect x="1237.0" y="115.0" width="10.4" height="10.7" fill="#f15a29"/><rect x="1247.2" y="115.0" width="10.4" height="10.7" fill="#f7941d"/><rect x="1257.5" y="115.0" width="10.4" height="10.7" fill="#fbb040"/><rect x="1113.6" y="125.6" width="10.4" height="10.7" fill="#f5e83a"/><rect x="1123.9" y="125.6" width="10.4" height="10.7" fill="#d7df23"/><rect x="1134.2" y="125.6" width="10.4" height="10.7" fill="#8dc63f"/><rect x="1144.4" y="125.6" width="10.4" height="10.7" fill="#39b54a"/><rect x="1154.7" y="125.6" width="10.4" height="10.7" fill="#009444"/><rect x="1165.0" y="125.6" width="10.4" height="10.7" fill="#006838"/><rect x="1175.3" y="125.6" width="10.4" height="10.7" fill="#2bb673"/><rect x="1185.6" y="125.6" width="10.4" height="10.7" fill="#1fada0"/><rect x="1195.8" y="125.6" width="10.4" height="10.7" fill="#27aae1"/><rect x="1206.1" y="125.6" width="10.4" height="10.7" fill="#1c75bc"/><rect x="1216.4" y="125.6" width="10.4" height="10.7" fill="#2b3990"/><rect x="1226.7" y="125.6" width="10.4" height="10.7" fill="#262262"/><rect x="1237.0" y="125.6" width="10.4" height="10.7" fill="#662d91"/><rect x="1247.2" y="125.6" width="10.4" height="10.7" fill="#92278f"/><rect x="1257.5" y="125.6" width="10.4" height="10.7" fill="#9e1f63"/><rect x="1113.6" y="136.2" width="10.4" height="10.7" fill="#da1c5c"/><rect x="1123.9" y="136.2" width="10.4" height="10.7" fill="#ee2a7b"/><rect x="1134.2" y="136.2" width="10.4" height="10.7" fill="#c2b59b"/><rect x="1144.4" y="136.2" width="10.4" height="10.7" fill="#998675"/><rect x="1154.7" y="136.2" width="10.4" height="10.7" fill="#736357"/><rect x="1165.0" y="136.2" width="10.4" height="10.7" fill="#534741"/><rect x="1175.3" y="136.2" width="10.4" height="10.7" fill="#c69c6d"/><rect x="1185.6" y="136.2" width="10.4" height="10.7" fill="#a67c52"/><rect x="1195.8" y="136.2" width="10.4" height="10.7" fill="#8c6239"/><rect x="1206.1" y="136.2" width="10.4" height="10.7" fill="#754c24"/><rect x="1216.4" y="136.2" width="10.4" height="10.7" fill="#603913"/><rect x="1226.7" y="136.2" width="10.4" height="10.7" fill="#3c2415"/><defs><linearGradient id="sg1"><stop offset="0" stop-color="#ffffff"/><stop offset="1" stop-color="#333333"/></linearGradient></defs><rect x="1237.0" y="136.2" width="10.3" height="10.3" fill="url(#sg1)"/><defs><linearGradient id="sg2"><stop offset="0" stop-color="#f7e11d"/><stop offset="1" stop-color="#f15a29"/></linearGradient></defs><rect x="1247.2" y="136.2" width="10.3" height="10.3" fill="url(#sg2)"/><defs><linearGradient id="sg3"><stop offset="0" stop-color="#2e6fd0"/><stop offset="1" stop-color="#e6f4ff"/></linearGradient></defs><rect x="1257.5" y="136.2" width="10.3" height="10.3" fill="url(#sg3)"/><rect x="1113.6" y="147" width="10.3" height="10.3" fill="#111"/><circle cx="1118.7" cy="152.1" r="3.3" fill="#eee"/><rect x="1123.9" y="147" width="10.3" height="10.3" fill="#9cc26a"/><circle cx="1128.9" cy="152" r="2.5" fill="#5a9a3a"/><rect x="1134.2" y="147" width="10.3" height="10.3" fill="#b99a7c"/><circle cx="1139.2" cy="152" r="2.5" fill="#8a6a50"/><rect x="1144.4" y="147" width="10.3" height="10.3" fill="#fff"/><path d="M1145.4,156 L1153.4,148" stroke="#999" stroke-width="0.8"/><path d="M1114.6,161 h3 l1,1 h5 v6 h-9z" fill="#c9c9c9"/><rect x="1123.9" y="158" width="10.4" height="10.3" fill="#000000"/><rect x="1134.2" y="158" width="10.4" height="10.3" fill="#3d3e40"/><rect x="1144.4" y="158" width="10.4" height="10.3" fill="#555658"/><rect x="1154.7" y="158" width="10.4" height="10.3" fill="#6d6e71"/><rect x="1165.0" y="158" width="10.4" height="10.3" fill="#808285"/><rect x="1175.3" y="158" width="10.4" height="10.3" fill="#939598"/><rect x="1185.6" y="158" width="10.4" height="10.3" fill="#a7a9ac"/><rect x="1195.8" y="158" width="10.4" height="10.3" fill="#bcbec0"/><rect x="1206.1" y="158" width="10.4" height="10.3" fill="#d1d3d4"/><rect x="1216.4" y="158" width="10.4" height="10.3" fill="#e6e7e8"/><rect x="1226.7" y="158" width="10.4" height="10.3" fill="#f1f2f2"/><path d="M1114.6,172 h3 l1,1 h5 v6 h-9z" fill="#c9c9c9"/><rect x="1123.9" y="169" width="10.4" height="10.3" fill="#ed1c24"/><rect x="1134.2" y="169" width="10.4" height="10.3" fill="#f26522"/><rect x="1144.4" y="169" width="10.4" height="10.3" fill="#ffde17"/><rect x="1154.7" y="169" width="10.4" height="10.3" fill="#00a651"/><rect x="1165.0" y="169" width="10.4" height="10.3" fill="#2e3192"/><rect x="1175.3" y="169" width="10.4" height="10.3" fill="#92278f"/></svg><div style="left:1109px;top:514px;width:176px;height:16px;background:#4b4b4b;"></div><div style="left:1109px;top:530px;width:176px;height:5px;background:#404040;"></div><div style="left:1109px;top:63px;width:1px;height:471px;background:#3e3e3e;"></div><div style="left:1114px;top:85px;width:1px;height:429px;background:#4e4e4e;"></div><svg style="left:1117px;top:518px;" width="14" height="10" viewBox="0 0 14 10"><path d="M1,1 V9 M4,1 V9 M6,1 L9,9" stroke="#d0d0d0" stroke-width="1.4" fill="none"/><circle cx="11.5" cy="8.5" r="1" fill="#d0d0d0"/></svg><div style="left:1287px;top:35px;width:27px;height:500px;background:#4f4f4f;"></div><div style="left:1314px;top:35px;width:2px;height:792px;background:#3a3a3a;"></div><div style="left:1287px;top:35px;width:27px;height:1px;background:#424242;"></div><div style="left:1293px;top:38px;width:15px;height:1px;background:#5e5e5e;"></div><div style="left:1287px;top:64px;width:27px;height:1px;background:#424242;"></div><div style="left:1293px;top:67px;width:15px;height:1px;background:#5e5e5e;"></div><div style="left:1287px;top:94px;width:27px;height:1px;background:#424242;"></div><div style="left:1293px;top:97px;width:15px;height:1px;background:#5e5e5e;"></div><div style="left:1287px;top:124px;width:27px;height:1px;background:#424242;"></div><div style="left:1293px;top:127px;width:15px;height:1px;background:#5e5e5e;"></div><div style="left:1287px;top:155px;width:27px;height:1px;background:#424242;"></div><div style="left:1293px;top:158px;width:15px;height:1px;background:#5e5e5e;"></div><div style="left:1287px;top:185px;width:27px;height:1px;background:#424242;"></div><div style="left:1293px;top:188px;width:15px;height:1px;background:#5e5e5e;"></div><div style="left:1287px;top:214px;width:27px;height:1px;background:#424242;"></div><svg style="left:1292px;top:43px;" width="17" height="16" viewBox="0 0 17 16"><circle cx="8.5" cy="8" r="5" fill="#d6d6d6"/><circle cx="8.5" cy="8" r="7" fill="none" stroke="#bbb" stroke-width="1" stroke-dasharray="1 1.3"/></svg><div style="left:1290px;top:69px;width:21px;height:21px;background:#343434;"></div><svg style="left:1292px;top:73px;" width="17" height="16" viewBox="0 0 17 16"><rect x="2" y="3" width="13" height="10" fill="none" stroke="#c8c8c8" stroke-width="1.3"/><rect x="4" y="5" width="3" height="2.5" fill="#c8c8c8"/><rect x="7.5" y="5" width="3" height="2.5" fill="#c8c8c8"/><rect x="11" y="5" width="2.5" height="2.5" fill="#c8c8c8"/><rect x="4" y="9" width="3" height="2.5" fill="#c8c8c8"/><rect x="7.5" y="9" width="3" height="2.5" fill="#c8c8c8"/><rect x="11" y="9" width="2.5" height="2.5" fill="#c8c8c8"/></svg><svg style="left:1292px;top:102px;" width="17" height="16" viewBox="0 0 17 16"><rect x="5" y="9" width="8" height="6" fill="#c8c8c8"/><path d="M6,9 L4,2 M9,9 L9,1 M12,9 L14,3" stroke="#c8c8c8" stroke-width="1.8"/></svg><svg style="left:1292px;top:133px;" width="17" height="16" viewBox="0 0 17 16"><defs><linearGradient id="g5"><stop offset="0" stop-color="#2a2a2a"/><stop offset="1" stop-color="#f0f0f0"/></linearGradient></defs><rect x="2" y="3" width="13" height="10" fill="url(#g5)" stroke="#c8c8c8" stroke-width="1.2"/></svg><svg style="left:1292px;top:164px;" width="17" height="16" viewBox="0 0 17 16"><rect x="2" y="1" width="9" height="9" fill="none" stroke="#c8c8c8" stroke-width="1.2"/><rect x="6" y="6" width="9" height="9" fill="#4f4f4f" stroke="#c8c8c8" stroke-width="1.2"/></svg><svg style="left:1292px;top:193px;" width="17" height="16" viewBox="0 0 17 16"><path d="M6,5 h-1 a3,3 0 0 0 0,6 h3 a3,3 0 0 0 2,-1 M11,11 h1 a3,3 0 0 0 0,-6 h-3 a3,3 0 0 0 -2,1" fill="none" stroke="#c8c8c8" stroke-width="1.6"/></svg><div style="left:1316px;top:35px;width:184px;height:792px;background:#535353;"></div><div style="left:1316px;top:35px;width:184px;height:19px;background:#454545;"></div><div style="left:1316px;top:35px;width:51px;height:19px;background:#535353;"></div><div style="left:1323.00px;top:40.00px;font:bold 9px 'Liberation Sans', sans-serif;line-height:9px;color:#f0f0f0;white-space:pre;transform:scaleX(0.8758);transform-origin:0 0;">Properties</div><div style="left:1374.00px;top:40.00px;font:bold 9px 'Liberation Sans', sans-serif;line-height:9px;color:#c6c6c6;white-space:pre;transform:scaleX(0.8611);transform-origin:0 0;">Layers</div><div style="left:1412.00px;top:40.00px;font:bold 9px 'Liberation Sans', sans-serif;line-height:9px;color:#c6c6c6;white-space:pre;transform:scaleX(0.8677);transform-origin:0 0;">Libraries</div><div style="left:1324.00px;top:62.75px;font:normal 8.5px 'Liberation Sans', sans-serif;line-height:8.5px;color:#dcdcdc;white-space:pre;transform:scaleX(0.9220);transform-origin:0 0;">Type</div><div style="left:1316px;top:78px;width:184px;height:1px;background:#474747;"></div><div style="left:1324.00px;top:86.25px;font:normal 8.5px 'Liberation Sans', sans-serif;line-height:8.5px;color:#dcdcdc;white-space:pre;transform:scaleX(0.9630);transform-origin:0 0;">Transform</div><svg style="left:1323px;top:111px;" width="15" height="15" viewBox="0 0 15 15"><rect x="0.5" y="0.5" width="3.5" height="3.5" fill="#f0f0f0"/><circle cx="2.2" cy="7.4" r="1.9" fill="none" stroke="#c9c9c9" stroke-width="0.9"/><circle cx="2.2" cy="12.600000000000001" r="1.9" fill="none" stroke="#c9c9c9" stroke-width="0.9"/><circle cx="7.4" cy="2.2" r="1.9" fill="none" stroke="#c9c9c9" stroke-width="0.9"/><circle cx="7.4" cy="7.4" r="1.9" fill="none" stroke="#c9c9c9" stroke-width="0.9"/><circle cx="7.4" cy="12.600000000000001" r="1.9" fill="none" stroke="#c9c9c9" stroke-width="0.9"/><circle cx="12.600000000000001" cy="2.2" r="1.9" fill="none" stroke="#c9c9c9" stroke-width="0.9"/><circle cx="12.600000000000001" cy="7.4" r="1.9" fill="none" stroke="#c9c9c9" stroke-width="0.9"/><circle cx="12.600000000000001" cy="12.600000000000001" r="1.9" fill="none" stroke="#c9c9c9" stroke-width="0.9"/></svg><div style="left:1348.00px;top:104.50px;font:normal 8px 'Liberation Sans', sans-serif;line-height:8px;color:#cfcfcf;white-space:pre;transform:scaleX(1.1901);transform-origin:0 0;">X:</div><div style="left:1359px;top:101.5px;width:40px;height:14px;background:#474747;border-radius:1px"></div><div style="left:1362.00px;top:104.25px;font:bold 8.5px 'Liberation Sans', sans-serif;line-height:8.5px;color:#f2f2f2;white-space:pre;transform:scaleX(0.9619);transform-origin:0 0;">0.482 in</div><div style="left:1409.00px;top:104.50px;font:normal 8px 'Liberation Sans', sans-serif;line-height:8px;color:#cfcfcf;white-space:pre;transform:scaleX(1.0373);transform-origin:0 0;">W:</div><div style="left:1421px;top:101.5px;width:40px;height:14px;background:#474747;border-radius:1px"></div><div style="left:1424.00px;top:104.25px;font:bold 8.5px 'Liberation Sans', sans-serif;line-height:8.5px;color:#f2f2f2;white-space:pre;transform:scaleX(0.9115);transform-origin:0 0;">4.611 in</div><div style="left:1348.00px;top:123.50px;font:normal 8px 'Liberation Sans', sans-serif;line-height:8px;color:#cfcfcf;white-space:pre;transform:scaleX(1.2632);transform-origin:0 0;">Y:</div><div style="left:1359px;top:120.5px;width:40px;height:14px;background:#474747;border-radius:1px"></div><div style="left:1362.00px;top:123.25px;font:bold 8.5px 'Liberation Sans', sans-serif;line-height:8.5px;color:#f2f2f2;white-space:pre;transform:scaleX(0.9743);transform-origin:0 0;">13.606 in</div><div style="left:1410.00px;top:123.50px;font:normal 8px 'Liberation Sans', sans-serif;line-height:8px;color:#cfcfcf;white-space:pre;transform:scaleX(1.1250);transform-origin:0 0;">H:</div><div style="left:1421px;top:120.5px;width:40px;height:14px;background:#474747;border-radius:1px"></div><div style="left:1424.00px;top:123.25px;font:bold 8.5px 'Liberation Sans', sans-serif;line-height:8.5px;color:#f2f2f2;white-space:pre;transform:scaleX(0.9619);transform-origin:0 0;">0.825 in</div><svg style="left:1344px;top:140px;" width="14" height="10" viewBox="0 0 14 10"><path d="M1,9 H10 M1,9 L8,2" stroke="#cfcfcf" stroke-width="1.1" fill="none"/><path d="M6,9 a4,4 0 0 0 -1,-3" stroke="#cfcfcf" fill="none"/></svg><div style="left:1358px;top:140px;width:40px;height:14px;background:#474747;"></div><div style="left:1384px;top:140px;width:14px;height:14px;background:#4d4d4d;"></div><div style="left:1361.00px;top:142.75px;font:normal 8.5px 'Liberation Sans', sans-serif;line-height:8.5px;color:#ececec;white-space:pre;">0°</div><svg style="left:1386.8px;top:144.8px;" width="7.4" height="5.4" viewBox="0 0 7.4 5.4"><path d="M1,1.35 L3.7,4.050000000000001 L6.4,1.35" fill="none" stroke="#cfcfcf" stroke-width="1.3"/></svg><svg style="left:1466px;top:112px;" width="14" height="15" viewBox="0 0 14 15"><path d="M5,6 L5,3.5 a2.5,2.5 0 0 1 5,0 L10,6 M5,9 L5,11.5 a2.5,2.5 0 0 0 5,0 L10,9 M2,2 L12,13" stroke="#c9c9c9" stroke-width="1.3" fill="none"/></svg><svg style="left:1424px;top:142px;" width="14" height="10" viewBox="0 0 14 10"><path d="M1,1 L5,5 L1,9Z M13,1 L9,5 L13,9Z" fill="none" stroke="#cfcfcf" stroke-width="1.1"/><path d="M7,0 V10" stroke="#cfcfcf" stroke-dasharray="1 1"/></svg><svg style="left:1447px;top:141px;" width="10" height="13" viewBox="0 0 10 13"><path d="M1,1 H9 L5,5Z M1,12 H9 L5,8Z" fill="#cfcfcf"/><path d="M0,6.5 H10" stroke="#cfcfcf" stroke-dasharray="1 1"/></svg><svg style="left:1478.5px;top:160.5px;" width="12" height="4" viewBox="0 0 12 4"><circle cx="2" cy="2" r="1.4" fill="#e0e0e0"/><circle cx="6" cy="2" r="1.4" fill="#e0e0e0"/><circle cx="10" cy="2" r="1.4" fill="#e0e0e0"/></svg><div style="left:1316px;top:171px;width:184px;height:1px;background:#474747;"></div><div style="left:1324.00px;top:181.25px;font:normal 8.5px 'Liberation Sans', sans-serif;line-height:8.5px;color:#dcdcdc;white-space:pre;transform:scaleX(0.8943);transform-origin:0 0;">Appearance</div><div style="left:1324px;top:199px;width:12px;height:12px;background:#000;border:1.3px solid #e8e8e8;box-sizing:border-box"></div><div style="left:1345.00px;top:200.75px;font:normal 8.5px 'Liberation Sans', sans-serif;line-height:8.5px;color:#e0e0e0;white-space:pre;transform:scaleX(1.0129);transform-origin:0 0;">Fill</div><svg style="left:1323px;top:219px;" width="14" height="14" viewBox="0 0 14 14"><rect x="1" y="1" width="12" height="12" fill="#f0f0f0"/><rect x="4" y="4" width="6" height="6" fill="#8a2b30"/><path d="M1,13 L13,1" stroke="#c8283a" stroke-width="1.4"/></svg><div style="left:1345.00px;top:221.75px;font:bold 8.5px 'Liberation Sans', sans-serif;line-height:8.5px;color:#ececec;white-space:pre;transform:scaleX(0.8689);transform-origin:0 0;text-decoration:underline">Stroke</div><div style="left:1380px;top:219px;width:12px;height:14px;background:#4a4a4a;"></div><svg style="left:1381px;top:220px;" width="10" height="12" viewBox="0 0 10 12"><path d="M2,4 L5,1.5 L8,4 M2,8 L5,10.5 L8,8" fill="none" stroke="#cfcfcf" stroke-width="1"/></svg><div style="left:1393px;top:219px;width:23px;height:14px;background:#474747;"></div><div style="left:1416px;top:219px;width:14px;height:14px;background:#4d4d4d;"></div><svg style="left:1418.8px;top:223.3px;" width="7.4" height="5.4" viewBox="0 0 7.4 5.4"><path d="M1,1.35 L3.7,4.050000000000001 L6.4,1.35" fill="none" stroke="#cfcfcf" stroke-width="1.3"/></svg><svg style="left:1323px;top:240px;" width="14" height="14" viewBox="0 0 14 14"><rect x="1" y="1" width="12" height="12" fill="none" stroke="#9a9a9a" stroke-width="1"/><path d="M4,4 h2 v2 h-2z M8,8 h2 v2 h-2z M8,4 h2 v2 h-2z M4,8 h2 v2 h-2z" fill="#777"/></svg><div style="left:1345.00px;top:242.75px;font:bold 8.5px 'Liberation Sans', sans-serif;line-height:8.5px;color:#ececec;white-space:pre;transform:scaleX(0.8978);transform-origin:0 0;text-decoration:underline">Opacity</div><div style="left:1380px;top:240px;width:36px;height:14px;background:#474747;"></div><div style="left:1383.00px;top:242.75px;font:normal 8.5px 'Liberation Sans', sans-serif;line-height:8.5px;color:#ececec;white-space:pre;transform:scaleX(0.8736);transform-origin:0 0;">100%</div><div style="left:1416px;top:240px;width:14px;height:14px;background:#4d4d4d;"></div><div style="left:1420.00px;top:242.00px;font:normal 10px 'Liberation Sans', sans-serif;line-height:10px;color:#cfcfcf;white-space:pre;">›</div><div style="left:1327.00px;top:264.50px;font:italic 9px 'Liberation Serif', serif;line-height:9px;color:#bdbdbd;white-space:pre;transform:scaleX(1.3714);transform-origin:0 0;">fx.</div><svg style="left:1478.5px;top:284px;" width="12" height="4" viewBox="0 0 12 4"><circle cx="2" cy="2" r="1.4" fill="#e0e0e0"/><circle cx="6" cy="2" r="1.4" fill="#e0e0e0"/><circle cx="10" cy="2" r="1.4" fill="#e0e0e0"/></svg><div style="left:1316px;top:295px;width:184px;height:1px;background:#474747;"></div><div style="left:1324.00px;top:303.75px;font:normal 8.5px 'Liberation Sans', sans-serif;line-height:8.5px;color:#dcdcdc;white-space:pre;transform:scaleX(0.9108);transform-origin:0 0;">Character</div><div style="left:1323px;top:319.5px;width:162px;height:16px;background:#3e78c5;border-radius:1px"></div><div style="left:1324px;top:320.5px;width:146px;height:14px;background:#f4f6fa;"></div><div style="left:1470px;top:320.5px;width:14px;height:14px;background:#2c3340;"></div><svg style="left:1473px;top:325px;" width="8" height="6" viewBox="0 0 8 6"><path d="M1,1.5 L4,4.5 L7,1.5" fill="none" stroke="#f0f0f0" stroke-width="1.3"/></svg><svg style="left:1326px;top:322px;" width="14" height="11" viewBox="0 0 14 11"><circle cx="7" cy="4.5" r="3" fill="none" stroke="#555" stroke-width="1"/><path d="M5,7 L2,10" stroke="#555" stroke-width="1.2"/><path d="M10,8 h2.5 l-1.2,1.5z" fill="#555"/></svg><div style="left:1341px;top:322px;width:20px;height:11px;background:#b6cdea;"></div><div style="left:1342.00px;top:323.25px;font:normal 8.5px 'Liberation Sans', sans-serif;line-height:8.5px;color:#2a2a2a;white-space:pre;transform:scaleX(0.8736);transform-origin:0 0;">Xants</div><div style="left:1459px;top:322.5px;width:10px;height:10px;background:#2a2a2a;border-radius:2px"></div><div style="left:1461.08px;top:322.50px;font:bold 10px 'Liberation Sans', sans-serif;line-height:10px;color:#fff;white-space:pre;">×</div><div style="left:1136px;top:336px;width:364px;height:473px;background:#2e2e2e;box-shadow:-2px 2px 6px rgba(0,0,0,0.45)"></div><div style="left:1137px;top:336px;width:363px;height:53px;background:#535353;"></div><div style="left:1144.00px;top:344.50px;font:normal 9px 'Liberation Sans', sans-serif;line-height:9px;color:#8b8b8b;white-space:pre;transform:scaleX(1.0215);transform-origin:0 0;">Fonts</div><div style="left:1185.00px;top:344.50px;font:bold 9px 'Liberation Sans', sans-serif;line-height:9px;color:#ececec;white-space:pre;transform:scaleX(0.9767);transform-origin:0 0;">Find More</div><div style="left:1178px;top:360.5px;width:56px;height:1.6px;background:#3a86cf;"></div><div style="left:1142px;top:366px;width:78px;height:20px;background:#474747;border-radius:2px"></div><svg style="left:1144px;top:369px;" width="14" height="14" viewBox="0 0 14 14"><path d="M2,2 L12,12 M12,2 L2,12" stroke="#cfcfcf" stroke-width="1.2"/><rect x="0.5" y="0.5" width="3" height="3" fill="none" stroke="#cfcfcf"/><rect x="10.5" y="10.5" width="3" height="3" fill="none" stroke="#cfcfcf"/></svg><div style="left:1161.00px;top:371.25px;font:bold 9.5px 'Liberation Sans', sans-serif;line-height:9.5px;color:#f0f0f0;white-space:pre;transform:scaleX(0.9072);transform-origin:0 0;">All Classes</div><svg style="left:1210.0px;top:373.5px;" width="7.0" height="5.0" viewBox="0 0 7.0 5.0"><path d="M1,1.25 L3.5,3.75 L6.0,1.25" fill="none" stroke="#cfcfcf" stroke-width="1.3"/></svg><svg style="left:1227px;top:370px;" width="12" height="12" viewBox="0 0 12 12"><path d="M6,0.5 L7.6,4.2 L11.5,4.4 L8.5,6.9 L9.5,10.8 L6,8.6 L2.5,10.8 L3.5,6.9 L0.5,4.4 L4.4,4.2Z" fill="#c9c9c9"/></svg><svg style="left:1248px;top:369px;" width="14" height="14" viewBox="0 0 14 14"><circle cx="7" cy="7" r="5.3" fill="none" stroke="#c9c9c9" stroke-width="1.3"/><path d="M7,3.5 V7 L9.5,8.5" stroke="#c9c9c9" stroke-width="1.2" fill="none"/></svg><svg style="left:1268px;top:369px;" width="15" height="14" viewBox="0 0 15 14"><circle cx="5.5" cy="7.5" r="4" fill="none" stroke="#9a9a9a" stroke-width="1.4"/><circle cx="9.5" cy="6.5" r="4.3" fill="none" stroke="#9a9a9a" stroke-width="1.4"/></svg><div style="left:1327.00px;top:371.25px;font:normal 9.5px 'Liberation Sans', sans-serif;line-height:9.5px;color:#f4f4f4;white-space:pre;transform:scaleX(1.0652);transform-origin:0 0;">The quick brown fox...</div><svg style="left:1426.5px;top:372.5px;" width="7.0" height="5.0" viewBox="0 0 7.0 5.0"><path d="M1,1.25 L3.5,3.75 L6.0,1.25" fill="none" stroke="#cfcfcf" stroke-width="1.3"/></svg><div style="left:1322px;top:385px;width:116px;height:1px;background:#cfcfcf;"></div><div style="left:1445.99px;top:373.50px;font:normal 9px 'Liberation Sans', sans-serif;line-height:9px;color:#bdbdbd;white-space:pre;">A</div><div style="left:1458px;top:367px;width:17px;height:19px;background:#3a3a3a;"></div><div style="left:1462.49px;top:371.00px;font:normal 12px 'Liberation Sans', sans-serif;line-height:12px;color:#e8e8e8;white-space:pre;">A</div><div style="left:1478.99px;top:368.50px;font:normal 15px 'Liberation Sans', sans-serif;line-height:15px;color:#d0d0d0;white-space:pre;">A</div><div style="left:1137px;top:389px;width:363px;height:19px;background:#4b4b4b;"></div><svg style="left:1142px;top:393px;" width="11" height="11" viewBox="0 0 11 11"><rect x="0.5" y="0.5" width="10" height="10" fill="#1d2a12" stroke="#8ad23c" stroke-width="1"/><text x="2.5" y="8" font-size="6" font-family="Liberation Sans" font-weight="bold" fill="#8ad23c">Tk</text></svg><div style="left:1157.00px;top:394.25px;font:bold 9.5px 'Liberation Sans', sans-serif;line-height:9.5px;color:#f4f4f4;white-space:pre;transform:scaleX(0.9409);transform-origin:0 0;">Showing Fonts From Typekit</div><div style="left:1137px;top:408px;width:363px;height:107px;background:#1c7ae0;"></div><svg style="left:1313px;top:421px;" width="11" height="11" viewBox="0 0 11 11"><rect x="0.5" y="0.5" width="10" height="10" fill="#1d2a12" stroke="#8ad23c" stroke-width="1"/><text x="2.5" y="8" font-size="6" font-family="Liberation Sans" font-weight="bold" fill="#8ad23c">Tk</text></svg><div style="left:1234.00px;top:438.25px;font:bold 11.5px 'Liberation Sans', sans-serif;line-height:11.5px;color:#ffffff;white-space:pre;transform:scaleX(0.9314);transform-origin:0 0;">Get the right font for your project</div><div style="left:1159.00px;top:454.50px;font:bold 9px 'Liberation Sans', sans-serif;line-height:9px;color:#ffffff;white-space:pre;">Explore from thousands of fonts by Typekit font library. You can sync the</div><div style="left:1159.00px;top:465.50px;font:bold 9px 'Liberation Sans', sans-serif;line-height:9px;color:#ffffff;white-space:pre;">font to your account instantly right from the application. It comes free</div><div style="left:1159.00px;top:476.50px;font:bold 9px 'Liberation Sans', sans-serif;line-height:9px;color:#ffffff;white-space:pre;transform:scaleX(0.9846);transform-origin:0 0;">with your Creative Cloud membership.</div><div style="left:1300px;top:489px;width:38px;height:15px;background:transparent;border:1.3px solid #fff;border-radius:8px;box-sizing:border-box"></div><div style="left:1307.50px;top:492.50px;font:bold 9px 'Liberation Sans', sans-serif;line-height:9px;color:#ffffff;white-space:pre;transform:scaleX(0.9787);transform-origin:0 0;">Got It</div><div style="left:1137px;top:515px;width:354px;height:293px;background:#ffffff;"></div><div style="left:1491px;top:515px;width:9px;height:293px;background:#4a4a4a;"></div><div style="left:1139px;top:697px;width:351px;height:23px;background:#d9d9d9;"></div><div style="left:1154.00px;top:522.25px;font:normal 9.5px 'Liberation Sans', sans-serif;line-height:9.5px;color:#3a3a3a;white-space:pre;letter-spacing:0.048px;">Aaux Next (16)</div><div style="left:1324.00px;top:518.25px;font:normal 14.5px 'Liberation Sans', serif;line-height:14.5px;color:#333;white-space:pre;transform:scaleX(0.9355);transform-origin:0 0;font-style:normal;">Sample</div><svg style="left:1474px;top:521.5px;" width="15" height="11" viewBox="0 0 15 11"><circle cx="5" cy="5.8" r="3.3" fill="none" stroke="#6a6a6a" stroke-width="1.3"/><circle cx="9.5" cy="5.2" r="3.6" fill="none" stroke="#6a6a6a" stroke-width="1.3"/></svg><div style="left:1154.00px;top:544.92px;font:normal 9.5px 'Liberation Sans', sans-serif;line-height:9.5px;color:#3a3a3a;white-space:pre;letter-spacing:0.017px;">Abadi (14)</div><div style="left:1324.00px;top:540.92px;font:normal 14.5px 'Liberation Sans', serif;line-height:14.5px;color:#222;white-space:pre;transform:scaleX(0.9762);transform-origin:0 0;font-style:normal;">Sample</div><svg style="left:1474px;top:544.17px;" width="15" height="11" viewBox="0 0 15 11"><circle cx="5" cy="5.8" r="3.3" fill="none" stroke="#6a6a6a" stroke-width="1.3"/><circle cx="9.5" cy="5.2" r="3.6" fill="none" stroke="#6a6a6a" stroke-width="1.3"/></svg><div style="left:1154.00px;top:567.59px;font:normal 9.5px 'Liberation Sans', sans-serif;line-height:9.5px;color:#3a3a3a;white-space:pre;letter-spacing:-0.031px;">Abigail Regular</div><div style="left:1324.00px;top:563.34px;font:bold 15px 'Liberation Sans', serif;line-height:15px;color:#111;white-space:pre;transform:scaleX(1.2182);transform-origin:0 0;font-style:normal;">Sample</div><svg style="left:1474px;top:566.84px;" width="15" height="11" viewBox="0 0 15 11"><circle cx="5" cy="5.8" r="3.3" fill="none" stroke="#6a6a6a" stroke-width="1.3"/><circle cx="9.5" cy="5.2" r="3.6" fill="none" stroke="#6a6a6a" stroke-width="1.3"/></svg><div style="left:1154.00px;top:590.26px;font:normal 9.5px 'Liberation Sans', sans-serif;line-height:9.5px;color:#3a3a3a;white-space:pre;letter-spacing:0.150px;">Abolition (4)</div><div style="left:1324.00px;top:585.76px;font:bold 15.5px 'Liberation Sans', serif;line-height:15.5px;color:#111;white-space:pre;transform:scaleX(0.4799);transform-origin:0 0;font-style:normal;">SAMPLE</div><svg style="left:1474px;top:589.51px;" width="15" height="11" viewBox="0 0 15 11"><circle cx="5" cy="5.8" r="3.3" fill="none" stroke="#6a6a6a" stroke-width="1.3"/><circle cx="9.5" cy="5.2" r="3.6" fill="none" stroke="#6a6a6a" stroke-width="1.3"/></svg><div style="left:1154.00px;top:612.93px;font:normal 9.5px 'Liberation Sans', sans-serif;line-height:9.5px;color:#3a3a3a;white-space:pre;letter-spacing:0.161px;">Abril (12)</div><div style="left:1324.00px;top:608.68px;font:normal 15px 'Liberation Serif', serif;line-height:15px;color:#222;white-space:pre;transform:scaleX(1.1333);transform-origin:0 0;font-style:normal;">Sample</div><svg style="left:1475px;top:612.6800000000001px;" width="13" height="10" viewBox="0 0 13 10"><path d="M3,9 a3,3 0 0 1 0.5,-6 a4,4 0 0 1 7,1 a2.5,2.5 0 0 1 0,5z" fill="none" stroke="#b5b5b5" stroke-width="1"/></svg><div style="left:1154.00px;top:635.60px;font:normal 9.5px 'Liberation Sans', sans-serif;line-height:9.5px;color:#3a3a3a;white-space:pre;letter-spacing:0.235px;">Abril Titling (32)</div><div style="left:1324.00px;top:631.35px;font:normal 15px 'Liberation Serif', serif;line-height:15px;color:#222;white-space:pre;transform:scaleX(1.1111);transform-origin:0 0;font-style:normal;">Sample</div><svg style="left:1474px;top:634.85px;" width="15" height="11" viewBox="0 0 15 11"><circle cx="5" cy="5.8" r="3.3" fill="none" stroke="#6a6a6a" stroke-width="1.3"/><circle cx="9.5" cy="5.2" r="3.6" fill="none" stroke="#6a6a6a" stroke-width="1.3"/></svg><div style="left:1154.00px;top:658.27px;font:normal 9.5px 'Liberation Sans', sans-serif;line-height:9.5px;color:#3a3a3a;white-space:pre;letter-spacing:-0.053px;">Acier BAT (5)</div><div style="left:1324.00px;top:655.52px;font:bold 12px 'Liberation Sans', serif;line-height:12px;color:#111;white-space:pre;transform:scaleX(1.0197);transform-origin:0 0;font-style:normal;">SAMPLE</div><svg style="left:1475px;top:658.02px;" width="13" height="10" viewBox="0 0 13 10"><path d="M3,9 a3,3 0 0 1 0.5,-6 a4,4 0 0 1 7,1 a2.5,2.5 0 0 1 0,5z" fill="none" stroke="#b5b5b5" stroke-width="1"/></svg><div style="left:1154.00px;top:680.94px;font:normal 9.5px 'Liberation Sans', sans-serif;line-height:9.5px;color:#3a3a3a;white-space:pre;letter-spacing:-0.146px;">AcroterionJF Regular</div><div style="left:1324.00px;top:677.19px;font:normal 14px 'Liberation Serif', serif;line-height:14px;color:#222;white-space:pre;transform:scaleX(0.8333);transform-origin:0 0;font-style:italic;">Sample</div><svg style="left:1474px;top:680.19px;" width="15" height="11" viewBox="0 0 15 11"><circle cx="5" cy="5.8" r="3.3" fill="none" stroke="#6a6a6a" stroke-width="1.3"/><circle cx="9.5" cy="5.2" r="3.6" fill="none" stroke="#6a6a6a" stroke-width="1.3"/></svg><div style="left:1154.00px;top:703.61px;font:normal 9.5px 'Liberation Sans', sans-serif;line-height:9.5px;color:#3a3a3a;white-space:pre;letter-spacing:-0.060px;">Active Regular</div><div style="left:1324.00px;top:700.11px;font:bold 13.5px 'Liberation Serif', serif;line-height:13.5px;color:#111;white-space:pre;transform:scaleX(0.8184);transform-origin:0 0;font-style:normal;">Sample</div><svg style="left:1475px;top:702.36px;" width="13" height="12" viewBox="0 0 13 12"><path d="M3,8 a3,3 0 0 1 0.5,-6 a4,4 0 0 1 7,1 a2.5,2.5 0 0 1 0,5" fill="none" stroke="#777" stroke-width="1"/><path d="M6.5,4 V11 M4.5,9 L6.5,11 L8.5,9" fill="none" stroke="#777"/></svg><div style="left:1441.00px;top:702.86px;font:normal 11px 'Liberation Sans', sans-serif;line-height:11px;color:#555;white-space:pre;">≈</div><svg style="left:1457px;top:702.86px;" width="11" height="11" viewBox="0 0 11 11"><path d="M5.5,0.5 L7,4 L10.5,4.2 L7.8,6.5 L8.7,10.2 L5.5,8.1 L2.3,10.2 L3.2,6.5 L0.5,4.2 L4,4Z" fill="none" stroke="#666" stroke-width="0.9"/></svg><svg style="left:1219px;top:703.36px;" width="10" height="10" viewBox="0 0 10 10"><circle cx="5" cy="5" r="4.3" fill="none" stroke="#555" stroke-width="0.9"/><path d="M5,4 V8 M5,2.2 V3" stroke="#555"/></svg><div style="left:1154.00px;top:726.28px;font:normal 9.5px 'Liberation Sans', sans-serif;line-height:9.5px;color:#3a3a3a;white-space:pre;letter-spacing:0.078px;">Acumin (90)</div><div style="left:1324.00px;top:722.28px;font:normal 14.5px 'Liberation Sans', serif;line-height:14.5px;color:#222;white-space:pre;transform:scaleX(0.7931);transform-origin:0 0;font-style:normal;">Sample</div><svg style="left:1475px;top:726.03px;" width="13" height="10" viewBox="0 0 13 10"><path d="M3,9 a3,3 0 0 1 0.5,-6 a4,4 0 0 1 7,1 a2.5,2.5 0 0 1 0,5z" fill="none" stroke="#b5b5b5" stroke-width="1"/></svg><div style="left:1154.00px;top:748.95px;font:normal 9.5px 'Liberation Sans', sans-serif;line-height:9.5px;color:#3a3a3a;white-space:pre;letter-spacing:0.019px;">Acuta (14)</div><div style="left:1324.00px;top:744.70px;font:normal 15px 'Liberation Serif', serif;line-height:15px;color:#222;white-space:pre;transform:scaleX(1.1333);transform-origin:0 0;font-style:normal;">Sample</div><svg style="left:1474px;top:748.2px;" width="15" height="11" viewBox="0 0 15 11"><circle cx="5" cy="5.8" r="3.3" fill="none" stroke="#6a6a6a" stroke-width="1.3"/><circle cx="9.5" cy="5.2" r="3.6" fill="none" stroke="#6a6a6a" stroke-width="1.3"/></svg><div style="left:1154.00px;top:771.62px;font:normal 9.5px 'Liberation Sans', sans-serif;line-height:9.5px;color:#3a3a3a;white-space:pre;letter-spacing:-0.211px;">AdageScriptJF Regular</div><div style="left:1324.00px;top:767.87px;font:normal 14px 'Liberation Serif', serif;line-height:14px;color:#222;white-space:pre;transform:scaleX(0.9286);transform-origin:0 0;font-style:italic;">Sample</div><svg style="left:1474px;top:770.87px;" width="15" height="11" viewBox="0 0 15 11"><circle cx="5" cy="5.8" r="3.3" fill="none" stroke="#e07080" stroke-width="1.3"/><circle cx="9.5" cy="5.2" r="3.6" fill="none" stroke="#e07080" stroke-width="1.3"/></svg><div style="left:1154.00px;top:794.29px;font:normal 9.5px 'Liberation Sans', sans-serif;line-height:9.5px;color:#3a3a3a;white-space:pre;letter-spacing:0.023px;">Adaptive Mono (4)</div><div style="left:1324.00px;top:790.54px;font:normal 14px 'Liberation Mono', serif;line-height:14px;color:#222;white-space:pre;transform:scaleX(0.9916);transform-origin:0 0;font-style:normal;">Sample</div><svg style="left:1474px;top:793.54px;" width="15" height="11" viewBox="0 0 15 11"><circle cx="5" cy="5.8" r="3.3" fill="none" stroke="#6a6a6a" stroke-width="1.3"/><circle cx="9.5" cy="5.2" r="3.6" fill="none" stroke="#6a6a6a" stroke-width="1.3"/></svg><div style="left:1492px;top:524px;width:7px;height:40px;background:#5e5e5e;border-radius:3px"></div><svg style="left:1491.5px;top:516px;" width="8" height="6" viewBox="0 0 8 6"><path d="M1,4.5 L4,1.5 L7,4.5" fill="none" stroke="#aaa" stroke-width="1.2"/></svg><svg style="left:1492.0px;top:800.5px;" width="7.0" height="5.0" viewBox="0 0 7.0 5.0"><path d="M1,1.25 L3.5,3.75 L6.0,1.25" fill="none" stroke="#999" stroke-width="1.3"/></svg><div style="left:1497px;top:35px;width:3px;height:301px;background:#474747;"></div><div style="left:1287px;top:808px;width:213px;height:15px;background:#474747;"></div><div style="left:1286px;top:808px;width:1px;height:15px;background:#383838;"></div><div style="left:1315px;top:808px;width:1px;height:15px;background:#383838;"></div><div style="left:1266.00px;top:813.50px;font:normal 9px 'Liberation Sans', sans-serif;line-height:9px;color:#999;white-space:pre;">›</div></body></html>
